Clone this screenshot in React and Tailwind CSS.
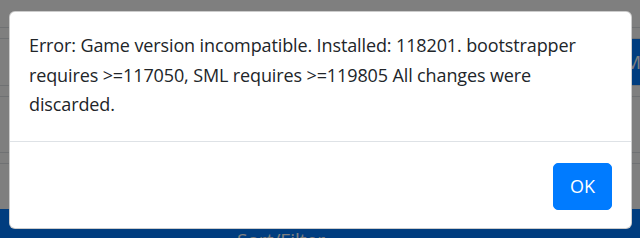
import React from "react";

const font = { fontFamily: '"Open Sans", "Noto Sans", sans-serif' };

const App = () => {
  return (
    <div
      className="relative h-[238px] w-[640px] overflow-hidden bg-white"
      style={font}
    >
      {/* page behind the dialog */}
      <div className="flex h-full flex-col">
        <div className="h-[28px] border-b border-[#dee2e6]" />
        <div className="h-[11px] border-b border-[#dee2e6]" />
        <div className="flex h-[47px] justify-end border-b border-[#dee2e6]">
          <div className="flex w-[120px] items-center bg-[#007bff] pl-[104px] text-[19px] text-white">
            Mi
          </div>
        </div>
        <div className="h-[11px] border-b border-[#dee2e6]" />
        <div className="h-[56px] border-b border-[#dee2e6]" />
        <div className="h-[11px] border-b border-[#dee2e6]" />
        <div className="flex-1" />
        <div className="flex h-[29px] justify-center bg-[#007bff] pr-[78px] pt-[17px] text-[19px] leading-[28px] text-white">
          Sort/Filter
        </div>
      </div>

      {/* backdrop */}
      <div className="absolute inset-0 bg-black/50" />

      {/* modal */}
      <div className="absolute left-[9px] top-[11px] w-[623px] rounded-[6px] border border-black/20 bg-white">
        <div className="px-[19px] pb-[21px] pt-[19px] text-[18px] leading-[29.5px] tracking-[-0.12px] text-[#212529]">
          Error: Game version incompatible. Installed: 118201. bootstrapper
          requires &gt;=117050, SML requires &gt;=119805 All changes were
          discarded.
        </div>
        <div className="flex justify-end border-t border-[#dee2e6] pb-[13px] pl-[14px] pr-[14px] pt-[16px]">
          <button className="m-[5px] rounded-[5px] border border-[#007bff] bg-[#007bff] px-[16px] py-[7px] text-[18px] leading-[31px] text-white">
            OK
          </button>
        </div>
      </div>
    </div>
  );
};

export default App;
